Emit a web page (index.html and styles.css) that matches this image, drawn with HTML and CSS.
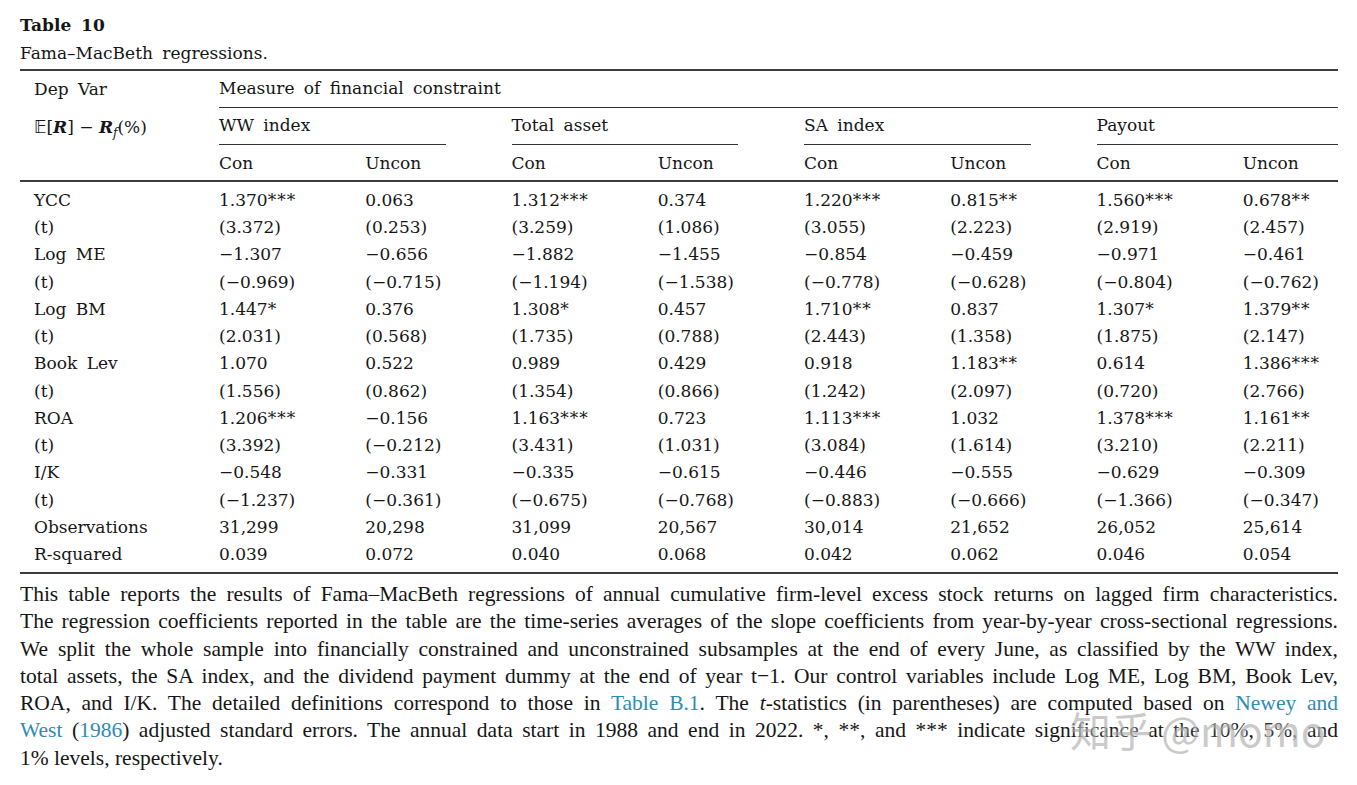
FILE: index.html
```html
<!DOCTYPE html>
<html lang="en">
<head>
  <meta charset="UTF-8" />
  <title>Table 10 – Fama–MacBeth regressions</title>
  <link rel="stylesheet" href="styles.css">
</head>
<body>
  <div class="page">
    <div class="caption">
      <div class="label">Table 10</div>
      <div class="title">Fama–MacBeth regressions.</div>
    </div>

    <table class="data-table">
      <colgroup>
        <col class="col-label">
        <col class="col-num"><col class="col-num">
        <col class="col-num"><col class="col-num">
        <col class="col-num"><col class="col-num">
        <col class="col-num"><col class="col-last">
      </colgroup>
      <thead>
        <tr class="head-1">
          <th class="row-label">Dep Var</th>
          <th colspan="8" class="span-all">Measure of financial constraint</th>
        </tr>
        <tr class="head-2">
          <th class="row-label math"><span class="bb">𝔼</span>[<b><i>R</i></b>] − <b><i>R</i></b><sub><i>f</i></sub>(%)</th>
          <th colspan="2"><div class="group">WW index</div></th>
          <th colspan="2"><div class="group">Total asset</div></th>
          <th colspan="2"><div class="group">SA index</div></th>
          <th colspan="2"><div class="group last">Payout</div></th>
        </tr>
        <tr class="head-3">
          <th class="row-label"></th>
          <th>Con</th><th>Uncon</th>
          <th>Con</th><th>Uncon</th>
          <th>Con</th><th>Uncon</th>
          <th>Con</th><th>Uncon</th>
        </tr>
      </thead>
      <tbody id="tableBody"></tbody>
    </table>

    <div class="notes">
      <span class="line">This table reports the results of Fama–MacBeth regressions of annual cumulative firm-level excess stock returns on lagged firm characteristics.</span>
      <span class="line">The regression coefficients reported in the table are the time-series averages of the slope coefficients from year-by-year cross-sectional regressions.</span>
      <span class="line">We split the whole sample into financially constrained and unconstrained subsamples at the end of every June, as classified by the WW index,</span>
      <span class="line">total assets, the SA index, and the dividend payment dummy at the end of year t−1. Our control variables include Log ME, Log BM, Book Lev,</span>
      <span class="line">ROA, and I/K. The detailed definitions correspond to those in <a class="ref">Table B.1</a>. The <i>t</i>-statistics (in parentheses) are computed based on <a class="ref">Newey and</a></span>
      <span class="line"><a class="ref">West</a> (<a class="ref">1986</a>) adjusted standard errors. The annual data start in 1988 and end in 2022. *, **, and *** indicate significance at the 10%, 5%, and</span>
      <span class="line end">1% levels, respectively.</span>
      <div class="watermark">知乎 @momo</div>
    </div>
  </div>

  <script>
    const rows = [
      ["YCC", "1.370***", "0.063", "1.312***", "0.374", "1.220***", "0.815**", "1.560***", "0.678**"],
      ["(t)", "(3.372)", "(0.253)", "(3.259)", "(1.086)", "(3.055)", "(2.223)", "(2.919)", "(2.457)"],
      ["Log ME", "−1.307", "−0.656", "−1.882", "−1.455", "−0.854", "−0.459", "−0.971", "−0.461"],
      ["(t)", "(−0.969)", "(−0.715)", "(−1.194)", "(−1.538)", "(−0.778)", "(−0.628)", "(−0.804)", "(−0.762)"],
      ["Log BM", "1.447*", "0.376", "1.308*", "0.457", "1.710**", "0.837", "1.307*", "1.379**"],
      ["(t)", "(2.031)", "(0.568)", "(1.735)", "(0.788)", "(2.443)", "(1.358)", "(1.875)", "(2.147)"],
      ["Book Lev", "1.070", "0.522", "0.989", "0.429", "0.918", "1.183**", "0.614", "1.386***"],
      ["(t)", "(1.556)", "(0.862)", "(1.354)", "(0.866)", "(1.242)", "(2.097)", "(0.720)", "(2.766)"],
      ["ROA", "1.206***", "−0.156", "1.163***", "0.723", "1.113***", "1.032", "1.378***", "1.161**"],
      ["(t)", "(3.392)", "(−0.212)", "(3.431)", "(1.031)", "(3.084)", "(1.614)", "(3.210)", "(2.211)"],
      ["I/K", "−0.548", "−0.331", "−0.335", "−0.615", "−0.446", "−0.555", "−0.629", "−0.309"],
      ["(t)", "(−1.237)", "(−0.361)", "(−0.675)", "(−0.768)", "(−0.883)", "(−0.666)", "(−1.366)", "(−0.347)"],
      ["Observations", "31,299", "20,298", "31,099", "20,567", "30,014", "21,652", "26,052", "25,614"],
      ["R-squared", "0.039", "0.072", "0.040", "0.068", "0.042", "0.062", "0.046", "0.054"]
    ];

    const tableBody = document.getElementById("tableBody");

    rows.forEach((row) => {
      const tr = document.createElement("tr");
      row.forEach((value, i) => {
        const td = document.createElement("td");
        if (i === 0) td.classList.add("row-label");
        // stars are spaced a bit wider in the original
        const match = value.match(/^(.*?)(\*+)$/);
        if (match) {
          td.textContent = match[1];
          const stars = document.createElement("span");
          stars.classList.add("stars");
          stars.textContent = match[2];
          td.appendChild(stars);
        } else {
          td.textContent = value;
        }
        tr.appendChild(td);
      });
      tableBody.appendChild(tr);
    });
  </script>
</body>
</html>
```

FILE: styles.css
```css
* {
  margin: 0;
  padding: 0;
  box-sizing: border-box;
}

body {
  background: #fff;
  color: #161616;
  font-family: "DejaVu Serif", "Liberation Serif", serif;
}

.page {
  width: 1318px;
  margin-left: 20px;
  padding-top: 11px;
}

.caption {
  font-size: 17px;
  line-height: 28px;
  word-spacing: 4px;
}

.caption .label {
  font-weight: bold;
}

/* table */
.data-table {
  width: 1318px;
  table-layout: fixed;
  border-collapse: separate;
  border-spacing: 0;
  border-top: 2px solid #3d3d3d;
  border-bottom: 2px solid #3d3d3d;
  font-size: 17px;
  word-spacing: 4px;
  margin-top: 2px;
}

.col-label { width: 199px; }
.col-num { width: 146.25px; }
.col-last { width: 95.25px; }

th, td {
  text-align: left;
  font-weight: normal;
  padding: 0;
  white-space: nowrap;
}

.row-label {
  padding-left: 14px;
}

thead tr {
  height: 37px;
}

.head-1 th {
  padding-bottom: 2px;
}

.head-1 th.span-all {
  border-bottom: 1.5px solid #333;
}

.head-2 th {
  vertical-align: bottom;
}

.head-2 .row-label {
  vertical-align: middle;
}

.math {
  word-spacing: 0;
}

.group {
  height: 37px;
  line-height: 35px;
  border-bottom: 1.5px solid #333;
  margin-right: 66px;
}

.group.last {
  margin-right: 0;
}

.head-3 th {
  border-bottom: 2px solid #3d3d3d;
}

.bb {
  font-family: "DejaVu Sans", sans-serif;
  font-weight: normal;
}

sub {
  font-size: 12px;
  vertical-align: -4px;
  line-height: 0;
}

tbody td {
  height: 27.23px;
  line-height: 27.23px;
}

tbody tr:first-child td {
  padding-top: 5px;
  height: 32.23px;
}

tbody tr:last-child td {
  padding-bottom: 4px;
  height: 31.23px;
}

.stars {
  letter-spacing: 1px;
}

/* notes under the table */
.notes {
  position: relative;
  margin-top: 7px;
  font-family: "Liberation Serif", serif;
  font-size: 21.5px;
  line-height: 27.2px;
}

.notes .line {
  display: block;
  text-align: justify;
  text-align-last: justify;
  white-space: nowrap;
}

.notes .line.end {
  text-align-last: left;
}

.ref {
  color: #2e8bb3;
  text-decoration: none;
}

.watermark {
  position: absolute;
  left: 1050px;
  top: 125px;
  font-family: "Noto Sans CJK SC", "Noto Sans", sans-serif;
  font-size: 41px;
  line-height: 46px;
  color: rgba(150, 150, 150, 0.5);
  text-shadow: 0 0 4px rgba(255, 255, 255, 0.8);
  white-space: nowrap;
}
```
